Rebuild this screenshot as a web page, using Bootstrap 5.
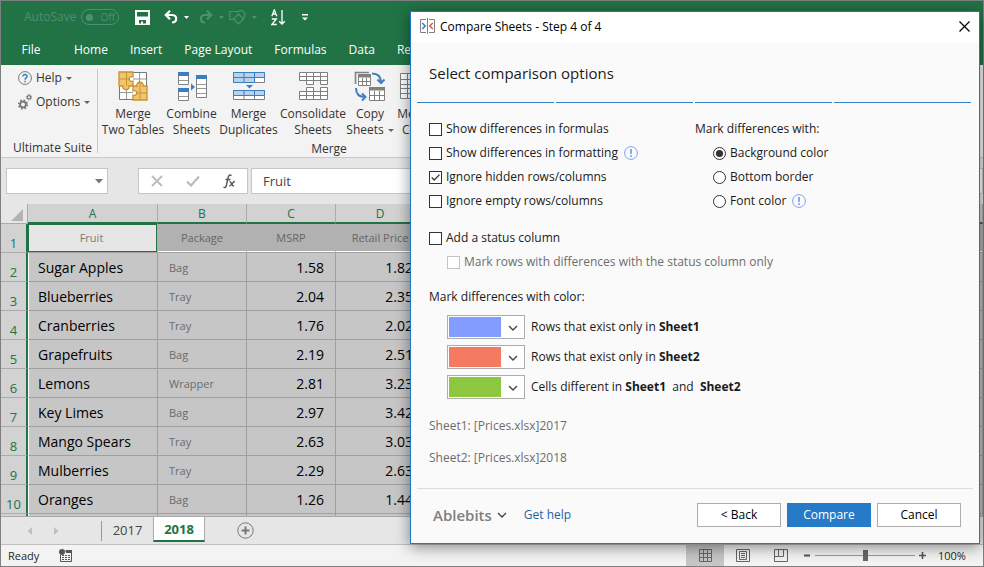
<!DOCTYPE html>
<html lang="en">
<head>
<meta charset="utf-8">
<meta name="viewport" content="width=device-width, initial-scale=1">
<title>Compare Sheets</title>
<link href="https://cdn.jsdelivr.net/npm/bootstrap@5.3.0/dist/css/bootstrap.min.css" rel="stylesheet">
<style>
body{font-family:"Open Sans","Noto Sans",sans-serif;font-size:12px;line-height:16px;color:#262626;background:#7f7f7f}
button{border:0;background:none;padding:0;color:inherit;font-size:inherit;line-height:inherit}
svg{display:block;flex:none}
.app{height:100vh;border:1px solid #7f7f7f;background:#e6e6e6}
.green{background:#217346;color:#fff}
.qat{height:32px;padding-left:23px}
.drop{gap:6px}
.gap-s{margin-left:5px}.gap-m{margin-left:10px}.gap-l{margin-left:14px}
.dim{color:#4f9070}
.toggle{width:38px;height:16px;border:1px solid #4f9070;border-radius:8px;font-size:10px}
.toggle i{width:7px;height:7px;border-radius:50%;background:#4f9070;margin:0 7px 0 4px;flex:none}
.menu{height:32px;padding-left:8px}
.menu button{padding:2px 11px 0;height:32px}
.menu .file-tab{width:44px;margin-right:10px}
.ribbon{height:93px;background:#f3f3f3;border-bottom:1px solid #c8c8c8;color:#333}
.suite{width:97px;padding:4px 0}
.suite-in{border-right:1px solid #c8c8c8;padding-left:12px;height:84px;gap:6px}
.suite button{height:18px;gap:4px;margin-left:5px}
.caret{width:0;height:0;border:3px solid transparent;border-top-color:#666;border-bottom:0}
.suite .group-name{height:10px;line-height:10px}
.merge-group{width:462px;padding:5px 6px 0}
.tool-row{gap:5px}
.t40{width:40px}.t48{width:49px}.t56{width:55px}.t58{width:58px}.t64{width:64px}
.fbar{padding:10px 0 10px 5px}
.fbox{height:26px;border:1px solid #c6c6c6;border-radius:0;background:#fff}
.namebox{width:102px}
.namebox input{border:0;width:80px;background:none;outline:0}
.dots{margin:0 15px}
.fbtns{width:110px}
.finput{font-size:13px;padding:0 11px;margin-left:3px;color:#444}
.grid{table-layout:fixed;width:100%;border-collapse:separate;border-spacing:0;line-height:18px}
.grid th{font-weight:400;background:#d2d2d2;color:#217346;text-align:center;padding:0;border-right:1px solid #ababab}
.grid thead th{height:20px;font-size:12px;line-height:16px;padding-top:2px;border-bottom:2px solid #217346}
.grid thead th:first-child{background:#e6e6e6;border-bottom:1px solid #ababab}
.grid tbody th{border-right:2px solid #217346;border-bottom:1px solid #ababab;vertical-align:bottom;height:29px;font-size:13px}
.grid td{height:29px;background:#c6c6c6;border-right:1px solid #a0a0a0;border-bottom:1px solid #a0a0a0;padding:2px 11px 0;color:#000;font-size:14px;overflow:hidden;white-space:nowrap}
.grid td:nth-child(2){border-left:1px solid #fff;padding-left:9px}
.grid td:nth-child(3){font-size:11px;color:#6b6b6b}
.grid td:nth-child(n+4){text-align:right}
.grid .head-row td{background:#b1b1b1;border-right-color:#b1b1b1;text-align:center;font-size:11px;color:#666;padding-top:0;box-shadow:inset 0 -1px #fff}
.grid .head-row td:nth-child(2){background:#e6e6e6;border-left:0;box-shadow:inset 0 0 0 1px #217346;color:#7b7b7b}
.corner{margin:0 4px 0 auto}
.c-num{width:27px}.c-a{width:130px}.c-n{width:89px}
.tabs{height:29px;border-top:1px solid #ababab;border-bottom:1px solid #c0c0c0;color:#444;font-size:13px}
.nav-arrows{width:100px;padding-left:26px;gap:22px}
.sep{width:1px;height:20px;background:#999}
.tab-off{width:51px;height:25px}
.tab-on{width:52px;height:25px;background:#fff;border-bottom:2px solid #217346;border-left:1px solid #ababab;border-right:1px solid #ababab;color:#217346;font-weight:700}
.status{height:21px;background:#f3f3f3;padding-left:7px;font-size:11px}
.view{width:38px;height:21px}
.view.on{background:#c6c6c6}
.zoom{-webkit-appearance:none;appearance:none;width:100px;height:13px;background:linear-gradient(#999,#999) 0 6px/100% 1px no-repeat;margin:0 4px}
.zoom::-webkit-slider-thumb{-webkit-appearance:none;width:5px;height:11px;background:#666}
.pct{width:57px;padding-left:12px}
.dialog{position:absolute;top:11px;right:4px;bottom:23px;width:570px;border:1px solid #1979ca;background:#fafafa;box-shadow:0 3px 14px rgba(0,0,0,.45);color:#1a1a1a}
.dlg-title{height:30px;background:#fff;padding:0 9px;gap:5px;color:#000}
.dlg-title svg{margin-bottom:2px}
.dlg-head{font-size:15px;line-height:22px;font-weight:400;margin:0;padding:20px 18px 18px}
.steps{gap:2px;padding:0 8px 0 6px}
.steps i{height:1px;background:#3b7fc4}
.content{padding:14px 18px 0}
.opt{height:24px;gap:4px}
.opt .form-check-input{width:13px;height:13px;margin:0;border-radius:0;border:1px solid #333;background-color:#fff;flex:none}
.opt .form-check-input[type=radio]{border-radius:50%}
.opt .form-check-input:checked{background-color:#fff;border-color:#333;background-size:13px 13px;background-position:-1px -1px;background-repeat:no-repeat}
.opt .form-check-input[type=checkbox]:checked{background-image:url("data:image/svg+xml,%3csvg xmlns='http://www.w3.org/2000/svg' viewBox='0 0 13 13'%3e%3cpath d='M2.7 6.4L5.2 9l5.3-5.4' fill='none' stroke='%23333' stroke-width='1.3'/%3e%3c/svg%3e")}
.opt .form-check-input[type=radio]:checked{background-image:url("data:image/svg+xml,%3csvg xmlns='http://www.w3.org/2000/svg' viewBox='0 0 13 13'%3e%3ccircle cx='6.5' cy='6.5' r='3.6' fill='%23333'/%3e%3c/svg%3e")}
.opt svg{margin-left:2px}
.opt .form-check-input:disabled{border-color:#c4c4c4;opacity:1}
.opt .form-check-input[type=checkbox]{border-radius:0}
.opt .form-check-label{opacity:1!important}
.muted{color:#6d6d6d}
.status-opt{margin-top:13px}
.indent{padding-left:18px}
.by-color{margin:15px 0 7px}
.pick{height:30px;gap:6px;padding-left:18px}
.pick select{appearance:none;width:78px;height:24px;border:1px solid #adadad;border-radius:0;background:url("data:image/svg+xml,%3csvg xmlns='http://www.w3.org/2000/svg' viewBox='0 0 10 6'%3e%3cpath d='M1 1l4 4 4-4' fill='none' stroke='%23444' stroke-width='1.4'/%3e%3c/svg%3e") 60px 9px/10px 6px no-repeat,linear-gradient(var(--c),var(--c)) 1px 1px/52px 20px no-repeat #fff}
.blue{--c:#829cff}.red{--c:#f47a62}.lime{--c:#8dc63f}
.files{margin-top:16px;gap:16px}
.dlg-foot{border-top:1px solid #dcdcdc;margin:0 6px;padding:14px 12px 16px}
.brand{font-size:15px;font-weight:600;color:#808080;gap:5px;margin:0 17px 0 4px}
.acts{gap:6px}
.act{width:84px;height:24px;padding:0;border-radius:0;font-size:12px;line-height:16px;border:1px solid #adadad;background:#fff;color:#000}
.act.go{background:#267bc8;border-color:#267bc8;color:#fff}
.help-link{color:#1f62a8}
</style>
<script src="https://cdn.jsdelivr.net/npm/bootstrap@5.3.0/dist/js/bootstrap.bundle.min.js"></script>
</head>
<body class="overflow-hidden">
<div class="app d-flex flex-column overflow-hidden">
  <header class="green">
    <div class="qat d-flex align-items-center">
      <span class="dim">AutoSave</span>
      <button class="toggle dim d-flex align-items-center gap-s" aria-label="AutoSave off"><i></i>Off</button>
      <button class="ms-3" aria-label="Save"><svg width="15" height="15" viewBox="0 0 15 15"><path fill="#fff" fill-rule="evenodd" d="M0 0h15v15H0zM2 2v4.500h11V2zM4 10v3.500h2V11.500h2v2h3V10z"/></svg></button>
      <button class="d-flex align-items-center drop gap-l" aria-label="Undo"><svg width="14" height="14" viewBox="0 0 14 14" fill="none" stroke="#fff" stroke-width="2.200"><path d="M6 .8L1.800 5 6 9.200M2 5h6.500c5 0 5 7.500-.5 7.500"/></svg><svg width="5" height="3" viewBox="0 0 5 3"><path fill="#fff" d="M0 0h5L2.500 3z"/></svg></button>
      <button class="d-flex align-items-center drop gap-m" aria-label="Redo"><svg width="14" height="14" viewBox="0 0 14 14" fill="none" stroke="#4f9070" stroke-width="2.200"><path d="M8 .8L12.200 5 8 9.200M12 5H5.500C.5 5 .5 12.500 6 12.500"/></svg><svg width="5" height="3" viewBox="0 0 5 3"><path fill="#4f9070" d="M0 0h5L2.500 3z"/></svg></button>
      <button class="d-flex align-items-center drop gap-s" aria-label="Shapes"><svg width="17" height="16" viewBox="0 0 17 16" fill="none" stroke="#4f9070" stroke-width="1.200"><path d="M5 10.500H.8V2.500h8M8 4a4.200 4.200 0 1 1 6.500 5M9.500 5l5 5-5 5-5-5z"/></svg><svg width="5" height="3" viewBox="0 0 5 3"><path fill="#4f9070" d="M0 0h5L2.500 3z"/></svg></button>
      <button class="gap-l" aria-label="Sort A to Z"><svg width="15" height="17" viewBox="0 0 15 17" fill="none" stroke="#fff" stroke-width="1.300"><path d="M.8 7.200L3.300.8l2.500 6.400M1.700 5h3.200M.8 10h4.600L.8 15.500h5M11 1v14M8.200 12.200L11 15l2.800-2.800"/></svg></button>
      <button class="ms-3" aria-label="Customize toolbar"><svg width="6" height="7" viewBox="0 0 6 7"><path fill="#fff" d="M0 0h6v1.400H0zM0 3.400h6L3 6.500z"/></svg></button>
    </div>
    <nav class="menu d-flex" aria-label="Ribbon tabs">
      <button class="file-tab">File</button><button>Home</button><button>Insert</button><button class="text-nowrap">Page Layout</button><button>Formulas</button><button>Data</button><button>Review</button>
    </nav>
  </header>

  <section class="ribbon d-flex">
    <div class="suite"><div class="suite-in d-flex flex-column">
      <button class="d-flex align-items-center"><svg width="14" height="14" viewBox="0 0 14 14" fill="none"><circle cx="7" cy="7" r="6.400" stroke="#777"/><path d="M4.900 5.400c0-2.600 4.300-2.500 4.200 0 0 1.500-2.100 1.500-2.100 3.300M7 9.700v1.500" stroke="#2f7bc0" stroke-width="1.400"/></svg>Help<span class="caret"></span></button>
      <button class="d-flex align-items-center"><svg width="14" height="16" viewBox="0 0 14 16" fill="none" stroke="#777"><circle cx="5" cy="10.500" r="2.900" stroke-width="1.800"/><circle cx="5" cy="10.500" r="4.300" stroke-width="1.600" stroke-dasharray="1.700 1.680"/><circle cx="11" cy="3.300" r="1.700" stroke-width="1.200"/><circle cx="11" cy="3.300" r="2.700" stroke-dasharray="1.100 1.020"/></svg>Options<span class="caret"></span></button>
      <div class="group-name mt-auto text-nowrap">Ultimate Suite</div>
    </div></div>
    <div class="merge-group d-flex flex-column justify-content-between">
      <div class="tool-row d-flex">
        <button class="t58 d-flex flex-column align-items-center text-nowrap"><svg class="mb-1" width="30" height="32" viewBox="0 0 30 32"><path fill="#fff" stroke="#777" d="M1.500 2.500h27v27h-27z"/><path stroke="#999" fill="none" d="M21.500 3v12M15 9h13M8.500 16v13M2 22.500h13"/><path fill="#f0c572" stroke="#c9922e" stroke-width="1.300" d="M1 2h14v5c-5-2-5 6 0 4v5h-4c1.500 5-7.500 5-6 0H1zM29 30H15v-5c5 2 5-6 0-4v-5h4c-1.500-5 7.500-5 6 0h4z"/><path stroke="#c9922e" fill="none" d="M8.500 2v14M1 9h10M22 13v17M19 23h10"/></svg>Merge<br>Two Tables</button>
        <button class="t48 d-flex flex-column align-items-center text-nowrap"><svg class="mb-1" width="30" height="32" viewBox="0 0 30 32"><path fill="#fff" stroke="#808080" d="M1.500 2.500h10v12h-10zM1.500 18.500h10v12h-10zM19.500 5.500h10v22h-10z"/><path stroke="#999" fill="none" d="M2 10.500h9M2 26.500h9M20 14.500h9M20 18.500h9M20 23.500h9"/><path fill="#3b7fc0" d="M1 2h11v4H1zM1 18h11v4H1zM19 5h11v4H19zM14 13.500l4 3.500-4 3.500z"/></svg>Combine<br>Sheets</button>
        <button class="t56 d-flex flex-column align-items-center text-nowrap"><svg class="mb-1" width="32" height="32" viewBox="0 0 32 32"><path fill="#fff" stroke="#808080" d="M.5 2.500h31v10H.5zM.5 20.500h31v9H.5z"/><path fill="#b9d1ea" stroke="#3b7fc0" d="M.5 2.500h31v5H21.500v5H.5zM.5 20.500h31v5H.5z"/><path stroke="#3b7fc0" fill="none" d="M.5 7.500h31M11 2.500v10M21.500 2.500v5M11 20.500V25M21.500 20.500V25"/><path stroke="#808080" d="M11 26v4M21.500 26v4"/><path fill="#3b7fc0" d="M13 15h7l-3.500 3.500z"/></svg>Merge<br>Duplicates</button>
        <button class="t64 d-flex flex-column align-items-center text-nowrap"><svg class="mb-1" width="30" height="32" viewBox="0 0 30 32" fill="#fff" stroke="#808080"><path d="M1.500 2.500h28v12h-7v-4h-7v4h-7v-4h-7zM1.500 29.500h28v-12h-7v4h-7v-4h-7v4h-7z"/><path fill="none" d="M1.500 6.500h28M8.500 2.500v8M15.500 2.500v12M22.500 2.500v8M1.500 10.500h28M1.500 25.500h28M8.500 21.500v8M15.500 17.500v12M22.500 21.500v8M1.500 21.500h28"/></svg>Consolidate<br>Sheets</button>
        <button class="t40 d-flex flex-column align-items-center text-nowrap"><svg class="mb-1" width="32" height="32" viewBox="0 0 32 32"><g fill="#fff" stroke="#808080"><path fill="none" d="M1.500 14V2.500H15" stroke-width="1.600"/><path d="M4.500 4.500h12v11h-12zM15.500 17.500h15v13h-15z"/><path d="M8.500 8v7M12.500 8v7M5 11.500h11M20.500 21v9M25.500 21v9M16 25.500h14"/></g><path fill="#808080" d="M4 4h13v3.500H4zM15 17h16v3.500H15z"/><path fill="none" stroke="#3b7fc0" stroke-width="2" d="M18 3.500c6 0 9 3 9 9M23.500 9.500l3.500 3.500 3.500-3.500M2 18c0 6 3 9 9 9M8 23.500l3.500 3.500L8 30.500"/></svg>Copy<span class="d-flex align-items-center gap-1">Sheets<i class="caret"></i></span></button>
        <button class="t40 d-flex flex-column align-items-center text-nowrap"><svg class="mb-1" width="32" height="32" viewBox="0 0 32 32" fill="#fff" stroke="#808080"><path d="M1.500 3.500h28v25h-28z"/><path d="M1.500 9.500h28M1.500 14.500h28M1.500 18.500h28M1.500 23.500h28M8.500 3.500v25M15.500 3.500v25M22.500 3.500v25"/></svg>Merge<br>Cells</button>
      </div>
      <div class="group-name text-center">Merge</div>
    </div>
  </section>

  <section class="fbar d-flex align-items-center">
    <div class="fbox namebox d-flex align-items-center justify-content-between pe-1"><input type="text" aria-label="Name box"><svg width="8" height="5" viewBox="0 0 8 5"><path fill="#777" d="M0 0h8L4 4.500z"/></svg></div>
    <svg class="dots" width="0" height="12" overflow="visible" viewBox="0 0 1 12"><path fill="#aaa" d="M-1 0h2v2h-2zM-1 5h2v2h-2zM-1 10h2v2h-2z"/></svg>
    <div class="fbox fbtns d-flex align-items-center justify-content-around">
      <button aria-label="Cancel entry"><svg width="12" height="12" viewBox="0 0 12 12" stroke="#bbb" stroke-width="1.800"><path d="M1 1l10 10M11 1L1 11"/></svg></button>
      <button aria-label="Enter"><svg width="14" height="12" viewBox="0 0 14 12" fill="none" stroke="#bbb" stroke-width="2.200"><path d="M1 6.500L5 10.500 13 1.500"/></svg></button>
      <button aria-label="Insert function"><svg width="13" height="15" viewBox="0 0 13 15" fill="none" stroke="#555" stroke-width="1.400"><path d="M8.500 1.600C6.500.3 5.500 1.600 5 4L3.500 11c-.5 2.500-1.500 3-3 2.200M2.500 5.500h5M6.500 7.500c2-.5 2.200 5 4.500 4.500M12 7.500c-2-.5-3.500 4.500-5.700 4.500" /></svg></button>
    </div>
    <input class="fbox finput flex-grow-1" type="text" value="Fruit" aria-label="Formula bar">
  </section>

  <main class="flex-grow-1 overflow-hidden">
    <table class="grid">
      <colgroup><col class="c-num"><col class="c-a"><col class="c-n"><col class="c-n"><col class="c-n"><col></colgroup>
      <thead><tr><th scope="col" aria-label="Select all"><svg class="corner" width="12" height="12" viewBox="0 0 12 12"><path fill="#b3b3b3" d="M12 0v12H0z"/></svg></th><th scope="col">A</th><th scope="col">B</th><th scope="col">C</th><th scope="col">D</th><th scope="col"></th></tr></thead>
      <tbody>
        <tr class="head-row"><th scope="row">1</th><td>Fruit</td><td>Package</td><td>MSRP</td><td>Retail Price</td><td></td></tr>
        <tr><th scope="row">2</th><td>Sugar Apples</td><td>Bag</td><td>1.58</td><td>1.82</td><td></td></tr>
        <tr><th scope="row">3</th><td>Blueberries</td><td>Tray</td><td>2.04</td><td>2.35</td><td></td></tr>
        <tr><th scope="row">4</th><td>Cranberries</td><td>Tray</td><td>1.76</td><td>2.02</td><td></td></tr>
        <tr><th scope="row">5</th><td>Grapefruits</td><td>Bag</td><td>2.19</td><td>2.51</td><td></td></tr>
        <tr><th scope="row">6</th><td>Lemons</td><td>Wrapper</td><td>2.81</td><td>3.23</td><td></td></tr>
        <tr><th scope="row">7</th><td>Key Limes</td><td>Bag</td><td>2.97</td><td>3.42</td><td></td></tr>
        <tr><th scope="row">8</th><td>Mango Spears</td><td>Tray</td><td>2.63</td><td>3.03</td><td></td></tr>
        <tr><th scope="row">9</th><td>Mulberries</td><td>Tray</td><td>2.29</td><td>2.63</td><td></td></tr>
        <tr><th scope="row">10</th><td>Oranges</td><td>Bag</td><td>1.26</td><td>1.44</td><td></td></tr>
        <tr><th scope="row"></th><td></td><td></td><td></td><td></td><td></td></tr>
      </tbody>
    </table>
  </main>

  <nav class="tabs d-flex flex-shrink-0" aria-label="Sheets">
    <div class="nav-arrows d-flex align-items-center">
      <button aria-label="Previous sheet"><svg width="5" height="8" viewBox="0 0 5 8"><path fill="#c0c0c0" d="M5 0v8L.5 4z"/></svg></button>
      <button aria-label="Next sheet"><svg width="5" height="8" viewBox="0 0 5 8"><path fill="#c0c0c0" d="M0 0v8l4.500-4z"/></svg></button>
    </div>
    <span class="sep align-self-center"></span>
    <button class="tab-off">2017</button>
    <button class="tab-on">2018</button>
    <button class="ms-4 ps-2" aria-label="New sheet"><svg width="17" height="17" viewBox="0 0 17 17" fill="none" stroke="#777"><circle cx="8.500" cy="8.500" r="7.700"/><path stroke-width="2" d="M8.500 4.500v8M4.500 8.500h8"/></svg></button>
  </nav>

  <footer class="status d-flex align-items-center flex-shrink-0">
    <span>Ready</span>
    <button class="ms-3 ps-1" aria-label="Record macro"><svg width="13" height="13" viewBox="0 0 13 13"><path fill="none" stroke="#555" d="M1.500 6v6.500h11V2H6"/><path fill="#555" d="M7 1h6v3H7z"/><circle cx="3" cy="3" r="3" fill="#555"/><path stroke="#555" stroke-dasharray="2 1" d="M3 6.500h9M3 8.500h9M3 10.500h9"/></svg></button>
    <div class="d-flex align-items-center ms-auto">
      <button class="view on d-flex align-items-center justify-content-center" aria-label="Normal view"><svg width="13" height="13" viewBox="0 0 13 13" fill="none" stroke="#666"><path d="M.5.5h12v12H.5zM.5 4.500h12M.5 8.500h12M4.500.5v12M8.500.5v12"/></svg></button>
      <button class="view d-flex align-items-center justify-content-center" aria-label="Page layout view"><svg width="14" height="13" viewBox="0 0 14 13" fill="none" stroke="#666"><path d="M.5.5h13v12H.5zM3.500 2.500h7v8h-7zM5 4.500h4M5 6.500h4M5 8.500h4"/></svg></button>
      <button class="view d-flex align-items-center justify-content-center" aria-label="Page break preview"><svg width="14" height="13" viewBox="0 0 14 13" fill="none" stroke="#666"><path d="M.5.5h13v12H.5zM4.500.5v7h-4M9.500.5v7h-5"/></svg></button>
      <button aria-label="Zoom out" class="ms-1"><svg width="7" height="7" viewBox="0 0 7 7"><path fill="#555" d="M0 2.500h6v2H0z"/></svg></button>
      <input class="zoom" type="range" min="0" max="100" value="50" aria-label="Zoom">
      <button aria-label="Zoom in"><svg width="7" height="7" viewBox="0 0 7 7"><path fill="#555" d="M0 2.700h7v1.600H0zM2.700 0h1.600v7H2.700z"/></svg></button>
      <span class="pct">100%</span>
    </div>
  </footer>
</div>

<section class="dialog d-flex flex-column" role="dialog" aria-labelledby="dlg-name">
  <div class="dlg-title d-flex align-items-center">
    <svg width="15" height="16" viewBox="0 0 15 16" fill="none"><path stroke="#808080" d="M6 1.500H.5v13H6M9 1.500h5.500v13H9M7.500 0v16"/><path stroke="#2f7bc0" stroke-width="1.500" d="M2.200 5l3 3-3 3"/><path stroke="#d2573a" stroke-width="1.500" d="M12.800 5l-3 3 3 3"/></svg>
    <span id="dlg-name">Compare Sheets - Step 4 of 4</span>
    <button class="ms-auto" aria-label="Close"><svg width="11" height="11" viewBox="0 0 11 11" stroke="#000" stroke-width="1.200"><path d="M.5.5l10 10M10.500.5l-10 10"/></svg></button>
  </div>
  <h1 class="dlg-head">Select comparison options</h1>
  <div class="steps d-flex"><i class="flex-fill"></i><i class="flex-fill"></i><i class="flex-fill"></i><i class="flex-fill"></i></div>
  <form class="content flex-grow-1">
    <div class="row g-0">
      <div class="col-6">
        <div class="opt d-flex align-items-center"><input class="form-check-input" type="checkbox" id="o1"><label for="o1">Show differences in formulas</label></div>
        <div class="opt d-flex align-items-center"><input class="form-check-input" type="checkbox" id="o2"><label for="o2">Show differences in formatting</label><svg width="14" height="14" viewBox="0 0 14 14" fill="none" stroke="#7f9ff5"><circle cx="7" cy="7" r="6.400"/><path stroke-width="1.800" d="M7 3v5M7 9.300v1.700"/></svg></div>
        <div class="opt d-flex align-items-center"><input class="form-check-input" type="checkbox" id="o3" checked><label for="o3">Ignore hidden rows/columns</label></div>
        <div class="opt d-flex align-items-center"><input class="form-check-input" type="checkbox" id="o4"><label for="o4">Ignore empty rows/columns</label></div>
      </div>
      <fieldset class="col-6">
        <div class="opt d-flex align-items-center">Mark differences with:</div>
        <div class="opt indent d-flex align-items-center"><input class="form-check-input" type="radio" name="with" id="r1" checked><label for="r1">Background color</label></div>
        <div class="opt indent d-flex align-items-center"><input class="form-check-input" type="radio" name="with" id="r2"><label for="r2">Bottom border</label></div>
        <div class="opt indent d-flex align-items-center"><input class="form-check-input" type="radio" name="with" id="r3"><label for="r3">Font color</label><svg width="14" height="14" viewBox="0 0 14 14" fill="none" stroke="#7f9ff5"><circle cx="7" cy="7" r="6.400"/><path stroke-width="1.800" d="M7 3v5M7 9.300v1.700"/></svg></div>
      </fieldset>
    </div>
    <div class="opt status-opt d-flex align-items-center"><input class="form-check-input" type="checkbox" id="o5"><label for="o5">Add a status column</label></div>
    <div class="opt indent muted d-flex align-items-center"><input type="checkbox" class="form-check-input" id="o6" disabled><label for="o6" class="form-check-label">Mark rows with differences with the status column only</label></div>
    <div class="by-color">Mark differences with color:</div>
    <div class="pick d-flex align-items-center"><select id="c1" class="blue"><option value="#829cff"></option></select><label for="c1">Rows that exist only in <b>Sheet1</b></label></div>
    <div class="pick d-flex align-items-center"><select id="c2" class="red"><option value="#f47a62"></option></select><label for="c2">Rows that exist only in <b>Sheet2</b></label></div>
    <div class="pick d-flex align-items-center"><select id="c3" class="lime"><option value="#8dc63f"></option></select><label for="c3">Cells different in <b>Sheet1</b>&nbsp; and &nbsp;<b>Sheet2</b></label></div>
    <div class="files muted d-flex flex-column"><div>Sheet1: [Prices.xlsx]2017</div><div>Sheet2: [Prices.xlsx]2018</div></div>
  </form>
  <div class="dlg-foot d-flex align-items-center">
    <button class="brand d-flex align-items-center">Ablebits<svg width="10" height="6" viewBox="0 0 10 6" fill="none" stroke="#444" stroke-width="1.400"><path d="M1 1l4 4 4-4"/></svg></button>
    <a class="help-link text-decoration-none" href="#">Get help</a>
    <div class="acts d-flex ms-auto"><button class="btn act">&lt; Back</button><button class="btn act go">Compare</button><button class="btn act">Cancel</button></div>
  </div>
</section>
</body>
</html>
